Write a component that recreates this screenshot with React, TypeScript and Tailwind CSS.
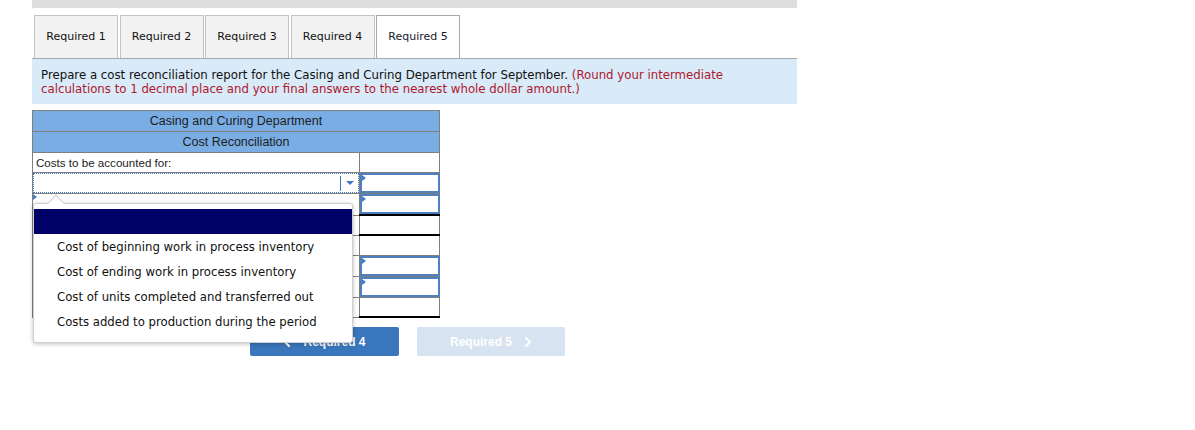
import React from 'react';

const tabs = ['Required 1', 'Required 2', 'Required 3', 'Required 4', 'Required 5'];

const options = [
  'Cost of beginning work in process inventory',
  'Cost of ending work in process inventory',
  'Cost of units completed and transferred out',
  'Costs added to production during the period',
];

// small blue flag that marks an answer cell
const Flag = () => (
  <span className="absolute left-0 top-0 h-0 w-0 border-y-[3px] border-l-[4px] border-y-transparent border-l-[#3f7fc4]" />
);

const InputCell = ({ bottom = 'border-b border-b-[#7f7f7f]' }: { bottom?: string }) => (
  <td className={`h-[20px] w-[80px] border-l border-[#7f7f7f] p-0 ${bottom}`}>
    <div className="relative h-[20px] border-2 border-[#4f80bd] bg-white">
      <Flag />
    </div>
  </td>
);

const Chevron = ({ left = false }: { left?: boolean }) => (
  <svg width="8" height="10" viewBox="0 0 8 10" fill="none">
    <path
      d={left ? 'M6 1 L2 5 L6 9' : 'M2 1 L6 5 L2 9'}
      stroke="currentColor"
      strokeWidth="2"
      strokeLinecap="round"
      strokeLinejoin="round"
    />
  </svg>
);

export default function App() {
  return (
    <div className="relative h-[430px] w-[1195px] bg-white font-['DejaVu_Sans',sans-serif] text-[#111]">
      <div className="ml-[32px] w-[765px]">
        <div className="h-[8px] bg-[#dedede]" />

        {/* tabs */}
        <div className="mt-[7px] flex gap-[1.5px] pl-[2px]">
          {tabs.map((t, i) => (
            <div
              key={t}
              className={`flex h-[43px] w-[84px] items-center justify-center border border-b-0 text-[11px] ${
                i === 4 ? 'border-[#a8a8a8] bg-white text-[#1a1a2e]' : 'border-[#c3c3c3] bg-[#f2f2f2]'
              }`}
            >
              {t}
            </div>
          ))}
        </div>

        {/* instructions */}
        <div className="h-[46px] border-t border-[#a8a8a8] bg-[#d9eaf8] pl-[9px] pt-[9px] text-[11.75px] leading-[14px]">
          Prepare a cost reconciliation report for the Casing and Curing Department for September.{' '}
          <span className="text-[#b0172f]">
            (Round your intermediate
            <br />
            calculations to 1 decimal place and your final answers to the nearest whole dollar amount.)
          </span>
        </div>

        {/* table */}
        <table className="mt-[6px] w-[408px] border-collapse font-['Liberation_Sans',Arial,sans-serif] text-[11.6px]">
          <tbody>
            <tr>
              <td colSpan={2} className="h-[21px] border border-[#7f7f7f] bg-[#79ade4] p-0 text-center text-[12.5px] text-[#1c1c1c]">
                Casing and Curing Department
              </td>
            </tr>
            <tr>
              <td colSpan={2} className="h-[21px] border border-[#7f7f7f] bg-[#79ade4] p-0 text-center text-[12.5px] text-[#1c1c1c]">
                Cost Reconciliation
              </td>
            </tr>
            <tr>
              <td className="h-[20px] w-[328px] border border-[#7f7f7f] p-0 pl-[3px] text-[#222]">Costs to be accounted for:</td>
              <td className="w-[80px] border border-[#7f7f7f] p-0" />
            </tr>
            <tr>
              <td className="h-[20px] border-x border-[#7f7f7f] p-0">
                <div className="flex h-[20px] items-center justify-end border border-dotted border-[#3d78c2] bg-white pr-[4px]">
                  <span className="mr-[5px] h-[15px] w-px bg-[#3d78c2]" />
                  <span className="h-0 w-0 border-x-[4px] border-t-[4px] border-x-transparent border-t-[#3d78c2]" />
                </div>
              </td>
              <InputCell />
            </tr>
            <tr>
              <td className="relative h-[20px] border border-[#7f7f7f] p-0">
                <Flag />
              </td>
              <InputCell bottom="border-b-2 border-b-black" />
            </tr>
            <tr>
              <td className="h-[20px] border border-[#7f7f7f] p-0" />
              <td className="border-x border-b-2 border-[#7f7f7f] border-b-black p-0" />
            </tr>
            <tr>
              <td className="h-[20px] border border-[#7f7f7f] p-0" />
              <td className="border border-[#7f7f7f] p-0" />
            </tr>
            <tr>
              <td className="h-[20px] border border-[#7f7f7f] p-0" />
              <InputCell />
            </tr>
            <tr>
              <td className="h-[20px] border border-[#7f7f7f] p-0" />
              <InputCell />
            </tr>
            <tr>
              <td className="h-[20px] border border-[#7f7f7f] p-0" />
              <td className="border-x border-b-2 border-[#7f7f7f] border-b-black p-0" />
            </tr>
          </tbody>
        </table>

        {/* nav buttons */}
        <div className="mt-[9px] flex gap-[18px] pl-[218px] font-['Liberation_Sans',Arial,sans-serif] text-[12px] font-bold text-white">
          <div className="flex h-[29px] w-[149px] items-center justify-center gap-[12px] rounded-[2px] bg-[#3a76bb]">
            <Chevron left />
            <span>Required 4</span>
          </div>
          <div className="flex h-[29px] w-[148px] items-center justify-center gap-[12px] rounded-[2px] bg-[#d7e3f1]">
            <span>Required 5</span>
            <Chevron />
          </div>
        </div>
      </div>

      {/* open dropdown list */}
      <div className="absolute left-[33px] top-[203px] w-[320px] rounded-[3px] border border-[#cfcfcf] bg-white pb-[7px] pt-[5px] shadow-[0_1px_4px_rgba(0,0,0,0.25)]">
        <span className="absolute left-[16px] top-[-7px] h-[12px] w-[12px] rotate-45 border-l border-t border-[#cfcfcf] bg-white" />
        <div className="relative h-[25px] bg-[#000066]" />
        <div className="pt-[1px] text-[11.7px]">
          {options.map((o) => (
            <div key={o} className="flex h-[25px] items-center pl-[23px] text-[#111]">
              {o}
            </div>
          ))}
        </div>
      </div>
    </div>
  );
}
